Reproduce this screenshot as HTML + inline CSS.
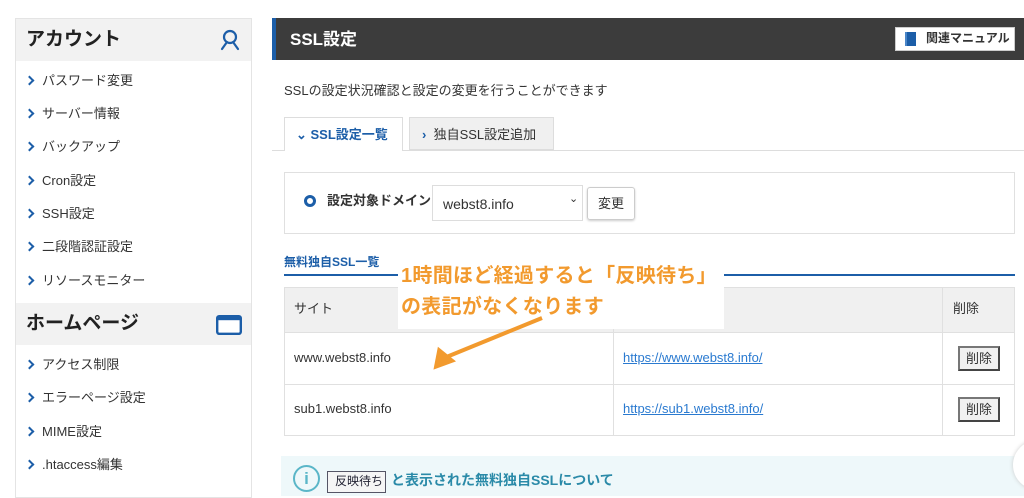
<!DOCTYPE html>
<html><head><meta charset="utf-8"><style>
*{box-sizing:border-box;margin:0;padding:0}
body{width:1024px;height:492px;overflow:hidden;background:#fff;font-family:"Liberation Sans","Noto Sans CJK JP",sans-serif;color:#333;position:relative;line-height:1.15}
.abs{position:absolute}
.side{left:15px;top:18px;width:237px;height:480px;border:1px solid #e4e4e4;background:#fff}
.sh{position:absolute;left:0;width:235px;height:42px;background:#f2f2f2;font-size:19px;font-weight:bold;color:#222;padding:10px 0 0 10px}
.si{position:absolute;left:10px;font-size:13px;color:#333}
.si:before{content:"";display:inline-block;width:5px;height:5px;border-top:2px solid #1c5ea8;border-right:2px solid #1c5ea8;transform:rotate(45deg);margin:0 9px 1px 0}
.txt{font-size:13px}
.btn{width:42px;height:25px;background:#f0f0f0;border:2px solid #444;border-left-color:#777;border-top-color:#777;font-size:13px;line-height:21px;text-align:center}
</style></head><body>
<div class="abs side">
 <div class="sh" style="top:0">アカウント
  <svg class="abs" style="left:203px;top:10px" width="22" height="22" viewBox="0 0 22 22"><circle cx="11" cy="8" r="6" fill="none" stroke="#1c5ea8" stroke-width="2.2"/><path d="M8 13 L3 20 M14 13 L19 20" stroke="#1c5ea8" stroke-width="2.2" fill="none" stroke-linecap="round"/></svg>
 </div>
 <div class="si" style="top:55px">パスワード変更</div>
 <div class="si" style="top:88px">サーバー情報</div>
 <div class="si" style="top:121px">バックアップ</div>
 <div class="si" style="top:155px">Cron設定</div>
 <div class="si" style="top:188px">SSH設定</div>
 <div class="si" style="top:221px">二段階認証設定</div>
 <div class="si" style="top:255px">リソースモニター</div>
 <div class="sh" style="top:284px">ホームページ
  <svg class="abs" style="left:200px;top:12px" width="26" height="20" viewBox="0 0 26 20"><rect x="1.2" y="1.2" width="23.6" height="17.6" rx="2" fill="#fff" stroke="#1c5ea8" stroke-width="2.4"/><rect x="1.2" y="1.2" width="23.6" height="4" fill="#1c5ea8"/></svg>
 </div>
 <div class="si" style="top:339px">アクセス制限</div>
 <div class="si" style="top:372px">エラーページ設定</div>
 <div class="si" style="top:406px">MIME設定</div>
 <div class="si" style="top:439px">.htaccess編集</div>
</div>

<div class="abs" style="left:272px;top:18px;width:752px;height:42px;background:#3c3c3c;border-left:4px solid #1c5ea8"></div>
<div class="abs" style="left:290px;top:30px;font-size:17px;font-weight:bold;color:#fff">SSL設定</div>
<div class="abs" style="left:895px;top:27px;width:120px;height:24px;background:#fff;border:1px solid #ccc;font-size:12px;font-weight:bold;color:#333;padding:4px 0 0 30px">関連マニュアル</div>
<div class="abs" style="left:905px;top:32px;width:11px;height:14px;background:#1c5ea8;border-left:2px solid #4a86c8"></div>

<div class="abs txt" style="left:284px;top:84px">SSLの設定状況確認と設定の変更を行うことができます</div>
<div class="abs" style="left:272px;top:150px;width:752px;height:1px;background:#ddd"></div>
<div class="abs" style="left:284px;top:117px;width:119px;height:34px;background:#fff;border:1px solid #ddd;border-bottom:none;font-size:13px;font-weight:bold;color:#1c5ea8;padding:10px 0 0 11px">⌄ SSL設定一覧</div>
<div class="abs" style="left:409px;top:117px;width:145px;height:33px;background:#f0f0f0;border:1px solid #ddd;font-size:13px;color:#333;padding:10px 0 0 12px"><span style="color:#1c5ea8;font-weight:bold">›</span>&nbsp; 独自SSL設定追加</div>

<div class="abs" style="left:284px;top:172px;width:731px;height:62px;border:1px solid #e0e0e0"></div>
<div class="abs" style="left:304px;top:195px;width:12px;height:12px;border:3px solid #1c5ea8;border-radius:50%"></div>
<div class="abs" style="left:327px;top:194px;font-size:13px;font-weight:bold;color:#333">設定対象ドメイン</div>
<div class="abs" style="left:432px;top:185px;width:151px;height:36px;border:1px solid #ddd;font-size:14px;padding:10px 0 0 10px">webst8.info<span class="abs" style="left:136px;top:7px;font-size:11px">⌄</span></div>
<div class="abs" style="left:587px;top:187px;width:48px;height:33px;border:1px solid #ccc;border-radius:3px;box-shadow:0 1px 2px #ccc;font-size:13px;line-height:31px;text-align:center">変更</div>

<div class="abs" style="left:284px;top:256px;font-size:12px;font-weight:bold;color:#1c5ea8">無料独自SSL一覧</div>
<div class="abs" style="left:284px;top:274px;width:731px;height:2px;background:#1c5ea8"></div>

<div class="abs" style="left:284px;top:287px;width:731px;height:149px;border:1px solid #e0e0e0"></div>
<div class="abs" style="left:285px;top:288px;width:729px;height:45px;background:#f0f0f0;border-bottom:1px solid #e0e0e0"></div>
<div class="abs" style="left:285px;top:384px;width:729px;height:1px;background:#e0e0e0"></div>
<div class="abs" style="left:613px;top:288px;width:1px;height:147px;background:#e0e0e0"></div>
<div class="abs" style="left:942px;top:288px;width:1px;height:147px;background:#e0e0e0"></div>
<div class="abs txt" style="left:294px;top:302px">サイト</div>
<div class="abs txt" style="left:953px;top:302px">削除</div>
<div class="abs txt" style="left:294px;top:351px">www.webst8.info</div>
<div class="abs txt" style="left:294px;top:402px">sub1.webst8.info</div>
<div class="abs txt" style="left:623px;top:351px;color:#2a7ad0;text-decoration:underline">https://www.webst8.info/</div>
<div class="abs txt" style="left:623px;top:402px;color:#2a7ad0;text-decoration:underline">https://sub1.webst8.info/</div>
<div class="abs btn" style="left:958px;top:346px">削除</div>
<div class="abs btn" style="left:958px;top:397px">削除</div>

<div class="abs" style="left:398px;top:261px;width:326px;height:68px;background:#fff"></div>
<div class="abs" style="left:401px;top:261px;font-size:20px;font-weight:bold;color:#f29a2e;line-height:31px;white-space:nowrap;letter-spacing:0.3px">1時間ほど経過すると「反映待ち」<br>の表記がなくなります</div>
<svg class="abs" style="left:420px;top:310px" width="130" height="65" viewBox="0 0 130 65"><path d="M122 8 L24 48" stroke="#f29a2e" stroke-width="4" fill="none"/><path d="M10 56 L22 36 L34 56 Z" fill="#f29a2e" transform="rotate(-20 22 48)"/></svg>

<div class="abs" style="left:281px;top:456px;width:743px;height:40px;background:#eef8fa"></div>
<div class="abs" style="left:293px;top:465px;width:27px;height:27px;border:2px solid #5ab6c8;border-radius:50%;color:#5ab6c8;font-size:17px;font-weight:bold;text-align:center;line-height:24px">i</div>
<div class="abs" style="left:327px;top:471px;width:59px;height:22px;background:#f5f5f5;border:1px solid #556;font-size:12px;color:#223;padding:3px 0 0 7px">反映待ち</div>
<div class="abs" style="left:391px;top:472px;font-size:14px;font-weight:bold;color:#2a8aa8">と表示された無料独自SSLについて</div>
<div class="abs" style="left:1013px;top:440px;width:50px;height:50px;border-radius:50%;background:#fff;box-shadow:0 0 4px #ccc"></div>
</body></html>
